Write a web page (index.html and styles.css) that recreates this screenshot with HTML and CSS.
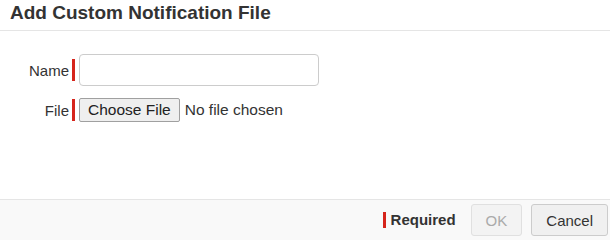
FILE: index.html
```html
<!doctype html>
<html lang="en">
<head>
  <meta charset="UTF-8" />
  <title>Add Custom Notification File</title>
  <link rel="stylesheet" href="styles.css">
</head>
<body>
  <div class="dialog">
    <header class="dialog-header">
      <h1>Add Custom Notification File</h1>
    </header>

    <div class="dialog-body">
      <div class="form-row">
        <label for="name-input" class="field-label">Name</label>
        <span class="required-mark"></span>
        <input id="name-input" type="text" class="text-input" />
      </div>
      <div class="form-row">
        <label for="file-input" class="field-label">File</label>
        <span class="required-mark"></span>
        <input id="file-input" type="file" class="file-input" />
      </div>
    </div>

    <footer class="dialog-footer">
      <span class="required-legend">Required</span>
      <button class="btn" disabled>OK</button>
      <button class="btn">Cancel</button>
    </footer>
  </div>
</body>
</html>
```

FILE: styles.css
```css
:root {
  --text-color: #333;
  --border-color: #e5e5e5;
  --required-color: #d6251c;
  font-family: 'Liberation Sans', Arial, sans-serif;
}

body {
  margin: 0;
  padding: 0;
  background-color: #fff;
  color: var(--text-color);
}

.dialog {
  width: 610px;
  height: 240px;
  display: flex;
  flex-direction: column;
}

.dialog-header {
  height: 31px;
  border-bottom: 1px solid var(--border-color);
  padding-left: 10px;
  box-sizing: border-box;
}

.dialog-header h1 {
  margin: 0;
  font-size: 19px;
  line-height: 26px;
  font-weight: bold;
  color: var(--text-color);
}

.dialog-body {
  flex: 1;
  padding-top: 23px;
  display: flex;
  flex-direction: column;
  gap: 12px;
}

.form-row {
  display: flex;
  align-items: center;
}

.field-label {
  width: 69px;
  text-align: right;
  font-size: 15px;
}

.required-mark {
  width: 3px;
  height: 22px;
  margin-left: 3px;
  margin-right: 4px;
  background-color: var(--required-color);
}

.text-input {
  width: 240px;
  height: 32px;
  box-sizing: border-box;
  border: 1px solid #ccc;
  border-radius: 4px;
  padding: 4px 8px;
  font-size: 15px;
  font-family: inherit;
}

.file-input {
  font-size: 15.5px;
  font-family: inherit;
  color: var(--text-color);
}

.file-input::file-selector-button {
  height: 24px;
  padding: 0 8px;
  margin-right: 5px;
  font-size: 15.5px;
  font-family: inherit;
  color: #222;
  background-color: #efefef;
  border: 1px solid #a0a0a0;
  border-radius: 2px;
}

.dialog-footer {
  height: 41px;
  box-sizing: border-box;
  border-top: 1px solid var(--border-color);
  background-color: #f9f9f9;
  display: flex;
  align-items: center;
  justify-content: flex-end;
  padding: 0 2px 0 0;
  gap: 9px;
}

.required-legend {
  font-size: 15px;
  font-weight: bold;
  border-left: 3px solid var(--required-color);
  padding-left: 5px;
  margin-right: 6px;
  line-height: 14px;
  padding-top: 1px;
  padding-bottom: 1px;
}

.btn {
  height: 32px;
  padding: 0 14px;
  font-size: 15px;
  font-family: inherit;
  color: var(--text-color);
  background-color: #f0f0f0;
  border: 1px solid #ccc;
  border-radius: 3px;
  cursor: pointer;
}

.btn:disabled {
  color: #aaa;
  background-color: #f3f3f3;
  border-color: #e0e0e0;
  cursor: default;
}
```
